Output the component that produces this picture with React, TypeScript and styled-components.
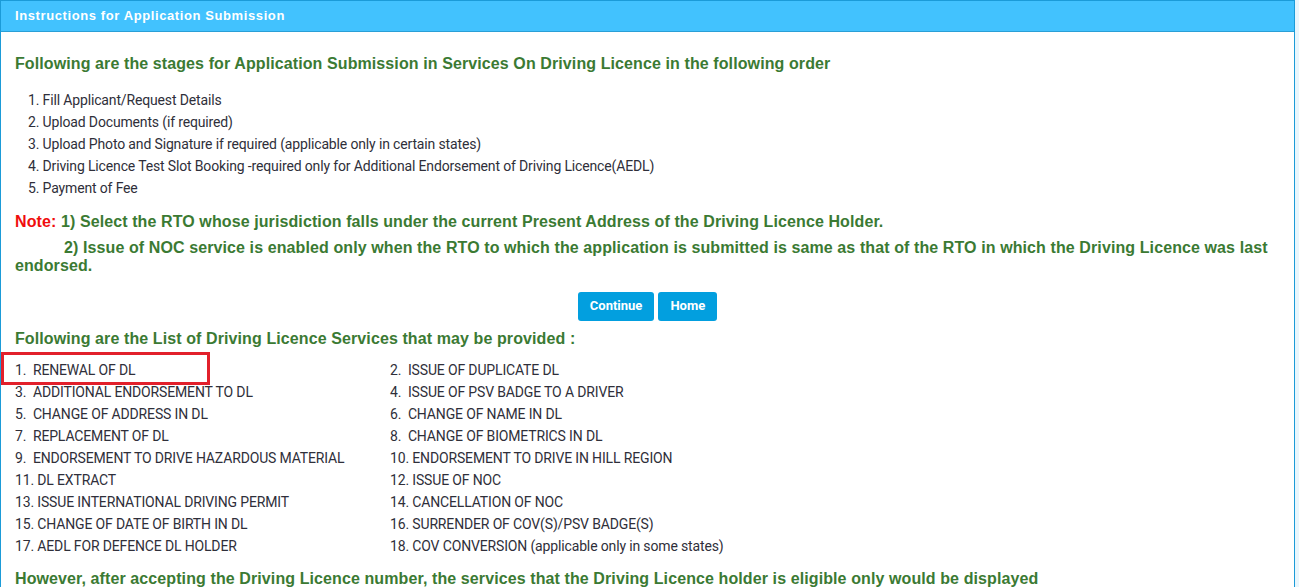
import React from "react";
import styled, {createGlobalStyle} from "styled-components";

const GlobalStyle = createGlobalStyle`
  html, body {
    margin: 0;
    padding: 0;
    background: #e8f6fd;
  }
  body {
    font-family: "Liberation Sans", Arial, sans-serif;
  }
`;

const Panel = styled.div`
  width: 1293px;
  background: #ffffff;
  border: 1px solid #1b9bd8;
  border-bottom: none;
  overflow: hidden;
`;

const PanelHeader = styled.div`
  height: 30px;
  background: #42c2fe;
  border-bottom: 1px solid #2a9fd6;
  color: #ffffff;
  font-weight: bold;
  font-size: 13px;
  line-height: 30px;
  padding-left: 14px;
  letter-spacing: 0.6px;
`;

const PanelBody = styled.div`
  padding: 0 14px;
`;

const Heading = styled.div<{ $top: number }>`
  margin-top: ${p => p.$top}px;
  color: #3b7a33;
  font-weight: bold;
  font-size: 16px;
  line-height: 20px;
  letter-spacing: 0.1px;
`;

const StageList = styled.ol`
  list-style: none;
  margin: 15px 0 0 0;
  padding: 0 0 0 13px;
`;

const Stage = styled.li`
  font-family: Roboto, "Liberation Sans", sans-serif;
  font-size: 14px;
  letter-spacing: -0.15px;
  line-height: 22px;
  color: #2f2f3a;
`;

const Note = styled.div`
  margin-top: 13px;
  color: #3b7a33;
  font-weight: bold;
  font-size: 16px;
  line-height: 20px;
  letter-spacing: 0.1px;
`;

const NoteLine = styled.div<{ $gap?: number }>`
  margin-top: ${p => p.$gap || 0}px;
  line-height: ${p => (p.$gap ? 18 : 20)}px;
`;

const NoteLabel = styled.span`
  color: #f00d0d;
`;

const Indent = styled.span`
  display: inline-block;
  width: 49px;
`;

const ButtonRow = styled.div`
  margin-top: 17px;
  display: flex;
  justify-content: center;
  gap: 4px;
`;

const Button = styled.button`
  height: 29px;
  padding: 0 12px 2px;
  border: none;
  border-radius: 3px;
  background: #029fdf;
  color: #ffffff;
  font-family: Roboto, "Liberation Sans", sans-serif;
  font-weight: bold;
  font-size: 13px;
  cursor: pointer;
`;

const ServiceGrid = styled.div`
  margin-top: 10px;
  display: grid;
  grid-template-columns: 375px 1fr;
`;

const Service = styled.div`
  position: relative;
  font-family: Roboto, "Liberation Sans", sans-serif;
  font-size: 14px;
  letter-spacing: -0.15px;
  line-height: 22px;
  color: #2f2f3a;
  white-space: pre;
`;

const Remark = styled.span`
  text-transform: none;
`;

const Highlight = styled.span`
  position: absolute;
  left: -14px;
  top: -7px;
  width: 203px;
  height: 27px;
  border: 3px solid #e2202b;
`;

const stages = [
  "1. Fill Applicant/Request Details",
  "2. Upload Documents (if required)",
  "3. Upload Photo and Signature if required (applicable only in certain states)",
  "4. Driving Licence Test Slot Booking -required only for Additional Endorsement of Driving Licence(AEDL)",
  "5. Payment of Fee",
];

const services = [
  "1.  RENEWAL OF DL",
  "2.  ISSUE OF DUPLICATE DL",
  "3.  ADDITIONAL ENDORSEMENT TO DL",
  "4.  ISSUE OF PSV BADGE TO A DRIVER",
  "5.  CHANGE OF ADDRESS IN DL",
  "6.  CHANGE OF NAME IN DL",
  "7.  REPLACEMENT OF DL",
  "8.  CHANGE OF BIOMETRICS IN DL",
  "9.  ENDORSEMENT TO DRIVE HAZARDOUS MATERIAL",
  "10. ENDORSEMENT TO DRIVE IN HILL REGION",
  "11. DL EXTRACT",
  "12. ISSUE OF NOC",
  "13. ISSUE INTERNATIONAL DRIVING PERMIT",
  "14. CANCELLATION OF NOC",
  "15. CHANGE OF DATE OF BIRTH IN DL",
  "16. SURRENDER OF COV(S)/PSV BADGE(S)",
  "17. AEDL FOR DEFENCE DL HOLDER",
  "18. COV CONVERSION",
];

export default function App() {
  return (
    <>
      <GlobalStyle/>
      <Panel>
        <PanelHeader>Instructions for Application Submission</PanelHeader>
        <PanelBody>
          <Heading $top={22}>
            Following are the stages for Application Submission in Services On Driving Licence in the following order
          </Heading>
          <StageList>
            {stages.map(s => <Stage key={s}>{s}</Stage>)}
          </StageList>
          <Note>
            <NoteLine>
              <NoteLabel>Note:</NoteLabel> 1) Select the RTO whose jurisdiction falls under the current Present Address of the Driving Licence Holder.
            </NoteLine>
            <NoteLine $gap={7}>
              <Indent/>2) Issue of NOC service is enabled only when the RTO to which the application is submitted is same as that of the RTO in which the Driving Licence was last endorsed.
            </NoteLine>
          </Note>
          <ButtonRow>
            <Button>Continue</Button>
            <Button>Home</Button>
          </ButtonRow>
          <Heading $top={8}>Following are the List of Driving Licence Services that may be provided :</Heading>
          <ServiceGrid>
            {services.map((s, i) => (
              <Service key={s}>
                {i === 0 && <Highlight/>}
                {s}
                {i === 17 && <Remark> (applicable only in some states)</Remark>}
              </Service>
            ))}
          </ServiceGrid>
          <Heading $top={12}>
            However, after accepting the Driving Licence number, the services that the Driving Licence holder is eligible only would be displayed
          </Heading>
        </PanelBody>
      </Panel>
    </>
  );
}
